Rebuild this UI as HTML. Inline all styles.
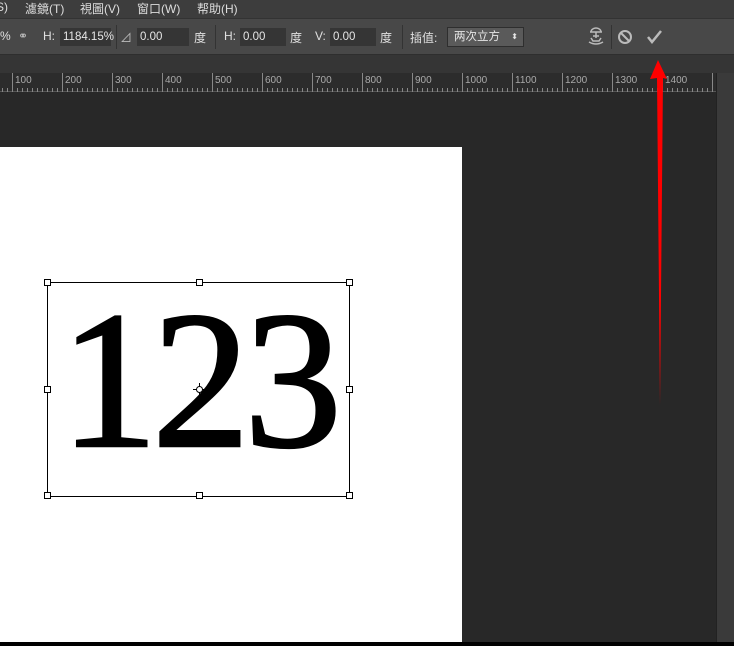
<!DOCTYPE html>
<html><head><meta charset="utf-8"><style>
*{margin:0;padding:0;box-sizing:border-box}
body{width:734px;height:646px;overflow:hidden;background:#282828;position:relative;font-family:"Liberation Sans","Noto Sans CJK SC",sans-serif;color:#ddd;font-size:12px}
.a{position:absolute}
.menu{left:0;top:0;width:734px;height:18px;background:#3d3d3d}
.menu span{position:absolute;top:0;font-size:12px;color:#ddd}
.opt{left:0;top:18px;width:734px;height:37px;background:#484848;border-top:1px solid #333;border-bottom:1px solid #2e2e2e}
.fld{position:absolute;top:9px;height:18px;background:#353535;color:#e6e6e6;font-size:11.5px;padding-left:3px;line-height:18px}
.lbl{position:absolute;top:10px;font-size:12px;color:#e0e0e0}
.sep{position:absolute;top:6px;width:1px;height:24px;background:#333}
.band{left:0;top:55px;width:734px;height:18px;background:#353535}
.ruler{left:0;top:73px;width:716px;height:19px;background:#2c2c2c;border-bottom:1px solid #555}
.ruler span{position:absolute;top:2px;font-size:10px;color:#aaa}
.doc{left:0;top:147px;width:462px;height:495px;background:#fff}
.sb{left:716px;top:73px;width:18px;height:569px;background:#3a3a3a;border-left:1px solid #222}
.h{position:absolute;width:7px;height:7px;border:1px solid #000;background:#fff}
</style></head><body>
<div class="a menu">
<span style="left:-4px">S)</span><span style="left:25px">濾鏡(T)</span><span style="left:80px">視圖(V)</span><span style="left:137px">窗口(W)</span><span style="left:197px">帮助(H)</span>
</div>
<div class="a opt">
<span class="lbl" style="left:0">%</span>
<span class="lbl" style="left:18px;color:#bbb">&#9901;</span>
<span class="lbl" style="left:43px">H:</span>
<div class="fld" style="left:60px;width:51px">1184.15%</div>
<div class="sep" style="left:116px"></div>
<span class="lbl" style="left:120px;color:#bbb">⊿</span>
<div class="fld" style="left:137px;width:52px">0.00</div>
<span class="lbl" style="left:194px">度</span>
<div class="sep" style="left:215px"></div>
<span class="lbl" style="left:224px">H:</span>
<div class="fld" style="left:240px;width:46px">0.00</div>
<span class="lbl" style="left:290px">度</span>
<span class="lbl" style="left:315px">V:</span>
<div class="fld" style="left:330px;width:46px">0.00</div>
<span class="lbl" style="left:380px">度</span>
<div class="sep" style="left:402px"></div>
<span class="lbl" style="left:410px">插值:</span>
<div class="fld" style="left:447px;width:77px;background:#5a5a5a;border:1px solid #2e2e2e;top:8px;height:20px;padding-left:6px">两次立方 <span style="position:absolute;right:5px;font-size:8px">⬍</span></div>
<svg class="a" style="left:586px;top:7px" width="20" height="22" viewBox="0 0 20 22"><path d="M4 6h12M5 6a5 4 0 0 1 10 0M7 10h6M10 6v6M5 12l2 3h6l2-3M3 16q7 4 14 0" stroke="#bbb" stroke-width="1.5" fill="none"/></svg>
<div class="sep" style="left:611px"></div>
<svg class="a" style="left:617px;top:10px" width="16" height="16"><circle cx="8" cy="8" r="6" stroke="#bbb" stroke-width="2" fill="none"/><path d="M4 4l8 8" stroke="#bbb" stroke-width="2"/></svg>
<svg class="a" style="left:646px;top:10px" width="18" height="16"><path d="M2 8l4 5 9-11" stroke="#bbb" stroke-width="2.5" fill="none"/></svg>
</div>
<div class="a band"></div>
<div class="a ruler">
<span style="left:15px">100</span><span style="left:65px">200</span><span style="left:115px">300</span><span style="left:165px">400</span><span style="left:215px">500</span><span style="left:265px">600</span><span style="left:315px">700</span><span style="left:365px">800</span><span style="left:415px">900</span><span style="left:465px">1000</span><span style="left:515px">1100</span><span style="left:565px">1200</span><span style="left:615px">1300</span><span style="left:665px">1400</span>
<svg class="a" style="left:0;top:0" width="716" height="19">
<defs><pattern id="t" x="12" y="0" width="5" height="19" patternUnits="userSpaceOnUse"><rect x="0" y="15" width="1" height="4" fill="#888"/></pattern>
<pattern id="m" x="12" y="0" width="50" height="19" patternUnits="userSpaceOnUse"><rect x="0" y="0" width="1" height="19" fill="#888"/></pattern></defs>
<rect width="716" height="19" fill="url(#t)"/><rect width="716" height="19" fill="url(#m)"/></svg>
</div>
<div class="a sb"></div>
<div class="a doc"></div>
<div class="a" style="left:0;top:642px;width:734px;height:4px;background:#000"></div>
<div class="a" style="left:60px;top:283px;font-family:'Liberation Serif',serif;font-size:196px;line-height:196px;color:#000;letter-spacing:-6px;-webkit-text-stroke:2.5px #000">123</div>
<div class="a" style="left:47px;top:282px;width:303px;height:215px;border:1px solid #000"></div>
<div class="h" style="left:44px;top:279px"></div><div class="h" style="left:196px;top:279px"></div><div class="h" style="left:346px;top:279px"></div>
<div class="h" style="left:44px;top:386px"></div><div class="h" style="left:346px;top:386px"></div>
<div class="h" style="left:44px;top:492px"></div><div class="h" style="left:196px;top:492px"></div><div class="h" style="left:346px;top:492px"></div>
<svg class="a" style="left:193px;top:383px" width="13" height="13"><path d="M6.5 0v13M0 6.5h13" stroke="#000"/><circle cx="6.5" cy="6.5" r="3" fill="#fff" stroke="#000"/></svg>
<svg class="a" style="left:640px;top:55px" width="40" height="360"><path d="M18 5L27 24L23 23L20 350L17 23L10 24Z" fill="#f00"/></svg>
</body></html>
